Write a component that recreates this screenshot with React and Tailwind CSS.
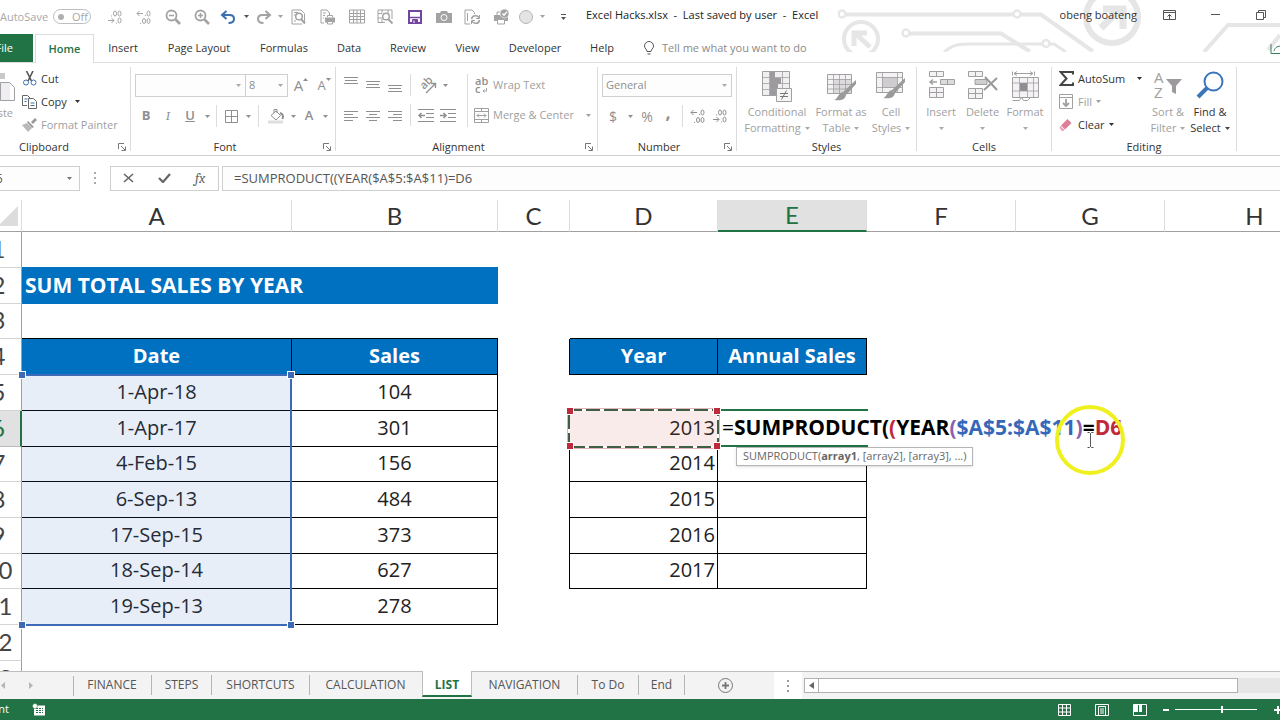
import React from 'react';
import clsx from 'clsx';

const Svg = ({ w, h, children, className }) => (
    <svg width={w} height={h} viewBox={`0 0 ${w} ${h}`} fill="none" stroke="currentColor" className={clsx('shrink-0', className)} aria-hidden="true">
        {children}
    </svg>
);

const Caret = ({ className }) => (
    <Svg w={5} h={3} className={className}>
        <path d="M0 0h5L2.5 3z" fill="currentColor" stroke="none" />
    </Svg>
);

const IconButton = ({ label, className, children }) => (
    <button aria-label={label} className={clsx('flex items-center justify-center h-[22px] shrink-0', className)}>
        {children}
    </button>
);

/* ---------- quick access icons ---------- */

const Decimals = ({ left }) => (
    <Svg w={16} h={14}>
        {left ? (
            <>
                <path d="M1 3.5h6M3.5 1L1 3.5 3.5 6" />
                <ellipse cx="12.5" cy="3.5" rx="1.5" ry="2.5" />
                <path d="M9 5.5h1M4 13.5h1" />
                <ellipse cx="8" cy="11" rx="1.5" ry="2.5" />
                <ellipse cx="12.5" cy="11" rx="1.5" ry="2.5" />
            </>
        ) : (
            <>
                <path d="M1 10.5h6M4.5 8L7 10.5 4.5 13" />
                <ellipse cx="12.5" cy="10.5" rx="1.5" ry="2.5" />
                <path d="M9 13h1M4 6h1" />
                <ellipse cx="8" cy="3.5" rx="1.5" ry="2.5" />
                <ellipse cx="12.5" cy="3.5" rx="1.5" ry="2.5" />
            </>
        )}
    </Svg>
);

const Zoom = ({ plus }) => (
    <Svg w={16} h={16}>
        <circle cx="6.5" cy="6.5" r="5" strokeWidth="1.8" />
        <path d="M10.5 10.5L15 15" strokeWidth="2.6" />
        <path d={plus ? 'M4 6.5h5M6.5 4v5' : 'M4 6.5h5'} strokeWidth="1.5" />
    </Svg>
);

const Undo = ({ flip }) => (
    <Svg w={16} h={14} className={flip ? '-scale-x-100' : ''}>
        <path d="M2 5h7.5c3 0 4.5 1.8 4.5 4S12 13 8.5 13" strokeWidth="2" />
        <path d="M6.5 1L2 5l4.500 4" strokeWidth="2" />
    </Svg>
);

const PageSearch = () => (
    <Svg w={15} h={16}>
        <path d="M13.5 13V4.5L10 1H1v14h10" />
        <path d="M3 3.5h4M3 6h2M3 12h2" />
        <circle cx="8" cy="7.5" r="3.3" strokeWidth="1.5" />
        <path d="M10 10l4 4.5" strokeWidth="2" />
    </Svg>
);

const PagePrint = () => (
    <Svg w={17} h={16}>
        <path d="M10.5 6V4L8 1H2v13h3" />
        <path d="M4 4h3M4 6.5h2M4 9h1" />
        <path d="M6 8.5h10v5H6z" fill="currentColor" stroke="none" />
        <path d="M8.5 8V6.5h5V8M8.5 12.5h5V15h-5z" fill="#fff" />
    </Svg>
);

const GridIcon = () => (
    <Svg w={16} h={15}>
        <path d="M.5 1h15v13H.5zM.5 4.5h15M.5 7.5h15M.5 10.5h15M4.5 1v13M8 1v13M11.5 1v13" />
    </Svg>
);

const GridSearch = () => (
    <Svg w={17} h={16}>
        <path d="M8 13.5H1V1h14v9M1 4.5h4M1 9h4M5 1v3M5 10v3M11 1v3" />
        <circle cx="9" cy="7.5" r="3.3" strokeWidth="1.5" />
        <path d="M11 10l4.5 4.5" strokeWidth="2" />
    </Svg>
);

const Save = () => (
    <Svg w={14} h={14}>
        <path d="M1 1h12v12H1z" strokeWidth="2" />
        <path d="M2 7.5h10" strokeWidth="1.5" />
        <path d="M4.5 9.5h5V13h-5z" fill="currentColor" />
        <path d="M6 10.5V13" stroke="#fff" />
    </Svg>
);

const Camera = () => (
    <Svg w={16} h={14}>
        <path d="M0 3h4l1-2h6l1 2h4v10H0z" fill="currentColor" stroke="none" />
        <circle cx="8" cy="7.5" r="3" stroke="#fff" />
    </Svg>
);

const PageRefresh = () => (
    <Svg w={17} h={16}>
        <path d="M10.5 5V3.5L8 1H1v14h5" />
        <path d="M3.5 4v8" />
        <path d="M7.5 10c.5-2.500 2.500-3.500 4.500-3.200 1.500.2 2.500 1 3 2.200M15.500 11c-.5 2.500-2.500 3.500-4.500 3.200-1.500-.2-2.500-1-3-2.200" strokeWidth="1.6" />
        <path d="M15.5 6v3.5H12M7.5 15v-3.5H11" />
    </Svg>
);

const PrintCheck = () => (
    <Svg w={17} h={16}>
        <path d="M1 6h14v6H1z" fill="currentColor" stroke="none" />
        <path d="M4 6V3h5M4.5 10.5h7V15h-7z" fill="#fff" />
        <circle cx="11.5" cy="4.5" r="4.5" fill="currentColor" stroke="#fff" strokeWidth=".6" />
        <path d="M9.5 4.5l1.5 1.7 3-3.400" stroke="#fff" strokeWidth="1.3" />
    </Svg>
);

/* circuit board pattern behind the caption buttons */
const Circuit = () => (
    <svg width="442" height="52" viewBox="838 0 442 52" fill="none" stroke="#e6e6e6" strokeWidth="4" className="absolute top-0 right-0" aria-hidden="true">
        <circle cx="842" cy="14" r="3.5" strokeWidth="2.5" />
        <path d="M846 14.500h167M1021 14.500h20l52 37" />
        <circle cx="1017" cy="14" r="3.500" strokeWidth="2.500" />
        <circle cx="906" cy="33" r="3.500" strokeWidth="2.500" />
        <path d="M910 33.500h91l29 18" />
        <path d="M944 52c10-9 18-8 34-8h64M1050 44h4l12 8" strokeWidth="3" />
        <circle cx="1046" cy="43.500" r="3.500" strokeWidth="2.500" />
        <circle cx="861" cy="39" r="17" />
        <path d="M854 46V33h13M855 33l15 14" strokeWidth="5" />
        <circle cx="1112" cy="17" r="26" strokeWidth="6" />
        <path d="M1101 28l19-19M1103 9h20v20" strokeWidth="7" />
        <path d="M1204 52l24-27h52M1268 50l12-15" />
    </svg>
);

const QuickAccess = () => (
    <div className="flex items-center text-[#a3a3a3]">
        <IconButton label="Increase decimal" className="w-[29px]"><Decimals /></IconButton>
        <IconButton label="Decrease decimal" className="w-[29px]"><Decimals left /></IconButton>
        <IconButton label="Zoom out" className="w-[29px]"><Zoom /></IconButton>
        <IconButton label="Zoom in" className="w-[29px]"><Zoom plus /></IconButton>
        <IconButton label="Undo" className="w-6 text-[#3b6fb0]"><Undo /></IconButton>
        <IconButton label="Undo list" className="w-3 text-[#555]"><Caret /></IconButton>
        <IconButton label="Redo" className="w-6"><Undo flip /></IconButton>
        <IconButton label="Redo list" className="w-2"><Caret /></IconButton>
        <IconButton label="Print preview" className="w-[29px]"><PageSearch /></IconButton>
        <IconButton label="Quick print" className="w-[29px]"><PagePrint /></IconButton>
        <IconButton label="Gridlines" className="w-[29px]"><GridIcon /></IconButton>
        <IconButton label="Zoom to selection" className="w-[29px]"><GridSearch /></IconButton>
        <IconButton label="Save" className="w-[29px] text-[#7245a0]"><Save /></IconButton>
        <IconButton label="Camera" className="w-[29px]"><Camera /></IconButton>
        <IconButton label="Refresh" className="w-[29px]"><PageRefresh /></IconButton>
        <IconButton label="Print" className="w-[29px]"><PrintCheck /></IconButton>
        <IconButton label="Record" className="w-5">
            <span className="size-[14px] rounded-full border border-[#b5b5b5] bg-[#e4e4e4]" />
        </IconButton>
        <IconButton label="Record list" className="w-3"><Caret /></IconButton>
        <IconButton label="Customize toolbar" className="w-[30px] text-[#555]">
            <Svg w={5} h={6}>
                <path d="M0 .5h5" />
                <path d="M0 3h5L2.5 6z" fill="currentColor" stroke="none" />
            </Svg>
        </IconButton>
    </div>
);

const TitleBar = () => (
    <header className="flex items-center h-[33px] shrink-0">
        <span className="w-[47px] text-[11px] leading-4 text-[#a8a8a8]">AutoSave</span>
        <button className="flex items-center gap-2 w-[38px] h-[15px] ml-[6px] mr-[9px] pl-1 rounded-full border border-[#bdbdbd] text-[11px] leading-3 text-[#a8a8a8]">
            <span className="size-[6px] rounded-full bg-[#b0b0b0]" />
            Off
        </button>
        <QuickAccess />
        <h1 className="ml-2 text-[11px] leading-4 pb-1 text-[#222] whitespace-pre">Excel Hacks.xlsx  -  Last saved by user  -  Excel</h1>
        <div className="ml-auto flex items-center pb-1 text-[#555]">
            <span className="text-[11px] leading-4 text-[#333] pr-5">obeng boateng</span>
            <IconButton label="Ribbon display options" className="w-[25px]">
                <Svg w={13} h={10}>
                    <path d="M.5.5h12v9H.5zM.5 2.5h12M6.5 9V4.5M4.5 6.5l2-2 2 2" />
                </Svg>
            </IconButton>
            <IconButton label="Minimize" className="w-[67px]">
                <Svg w={9} h={1}><path d="M0 .5h9" /></Svg>
            </IconButton>
            <IconButton label="Restore" className="w-[31px] pl-1 pr-3">
                <Svg w={10} h={10}><path d="M.5 2.5h7v7h-7zM2.5 2.5v-2h7v7h-2" /></Svg>
            </IconButton>
        </div>
    </header>
);

const menuTabs = [
    ['Insert', 'w-[58px]'],
    ['Page Layout', 'w-[94px]'],
    ['Formulas', 'w-[76px]'],
    ['Data', 'w-[54px]'],
    ['Review', 'w-[64px]'],
    ['View', 'w-[55px]'],
    ['Developer', 'w-[80px]'],
    ['Help', 'w-[54px]'],
];

const MenuBar = () => (
    <nav className="relative flex h-[30px] pt-px border-b border-[#dcdcdc] text-[11px] text-[#333] shrink-0">
        <button className="flex justify-end items-center w-[33px] h-7 pr-5 bg-[#217346] text-white">File</button>
        <button className="ml-[2px] w-[59px] h-[29px] bg-white border border-b-0 border-[#dcdcdc] text-[#217346] font-semibold">Home</button>
        {menuTabs.map(([name, width]) => (
            <button key={name} className={clsx('h-7 pt-px whitespace-nowrap', width)}>{name}</button>
        ))}
        <label className="flex items-center h-7 pl-[15px] gap-2 text-[#555]">
            <Svg w={10} h={14}>
                <path d="M3 10.5c0-2-2.500-3-2.500-5.500a4.500 4.500 0 0 1 9 0c0 2.500-2.500 3.500-2.500 5.500zM3.500 13h3" />
            </Svg>
            <input className="w-44 bg-transparent outline-none placeholder:text-[#8a8a8a]" placeholder="Tell me what you want to do" aria-label="Tell me what you want to do" />
        </label>
        <button aria-label="Share" className="ml-auto h-7 w-[10px] overflow-hidden text-[#3a7d5a]">
            <Svg w={14} h={12}>
                <path d="M1 2v9.5h13M4 9c1-4 4-5 8-5" />
            </Svg>
        </button>
    </nav>
);

/* ---------- ribbon ---------- */

const Launcher = () => (
    <Svg w={8} h={8} className="text-[#777]">
        <path d="M.5 6V.5H6M3 3l4 4M7.5 3.5v4h-4" />
    </Svg>
);

const Group = ({ label, width, launcher, children }) => (
    <section className="flex shrink-0" aria-label={label}>
        <div className={clsx('flex flex-col', width)}>
            <div className="h-[72px]">{children}</div>
            <div className="flex items-center h-4 text-[11px] leading-4 text-[#333]">
                <span className={clsx('flex-1 text-center', launcher && 'pr-1')}>{label}</span>
                {launcher && (
                    <button aria-label={`${label} settings`} className="w-3"><Launcher /></button>
                )}
            </div>
        </div>
        <div className="w-px h-[84px] bg-[#dcdcdc]" />
    </section>
);

const Divider = ({ className }) => <div className={clsx('w-px h-[22px] bg-[#dcdcdc]', className)} />;

const Lines = ({ widths, align }) => (
    <Svg w={14} h={11}>
        {widths.map((w, i) => {
            const x = align === 'right' ? 14 - w : align === 'center' ? (14 - w) / 2 : 0;
            return <path key={i} d={`M${x} ${i * 3 + 1.5}h${w}`} />;
        })}
    </Svg>
);

const ClipboardGroup = () => (
    <Group label="Clipboard" width="w-[156px] -ml-[26px]" launcher>
        <div className="flex">
            <button className="flex flex-col items-end w-12 pt-1 shrink-0 text-[11px] leading-4 text-[#a0a0a0]">
                <Svg w={22} h={34} className="mr-1.5">
                    <path d="M0 2h11v6H0z" fill="#c9c9c9" stroke="none" />
                    <path d="M2 11h14v18H2z" fill="#efedf1" stroke="none" />
                    <path d="M6.5 11.5h9l5 5v13h-14z" />
                </Svg>
                <span className="pr-[9px]">Paste</span>
            </button>
            <div className="flex flex-col text-[11px] leading-4 text-[#333]">
                <button className="flex items-center gap-1 h-[23px]">
                    <Svg w={15} h={15}>
                        <path d="M4.5 0l5 10M11 0L6 10" stroke="#555" strokeWidth="1.6" />
                        <circle cx="4" cy="11.5" r="2.5" stroke="#3b6fb0" />
                        <circle cx="11.5" cy="11.5" r="2.5" stroke="#3b6fb0" />
                    </Svg>
                    Cut
                </button>
                <button className="flex items-center gap-1 h-[23px]">
                    <Svg w={15} h={14}>
                        <path d="M5 10.5H.5V.5h5l3 3" stroke="#666" />
                        <path d="M6.5 3.5h5l3 3v7h-8z" stroke="#666" />
                        <path d="M2.5 4h3M2.5 6.5h2M8.5 8h4M8.5 10.5h4" stroke="#3b6fb0" />
                    </Svg>
                    Copy
                    <Caret className="ml-1" />
                </button>
                <button className="flex items-center gap-1 h-[23px] text-[#a0a0a0] whitespace-nowrap">
                    <Svg w={15} h={14}>
                        <path d="M9 4l4-4 2 2-4 4z" fill="#999" stroke="none" />
                        <path d="M6 3l6 6-2 1-5-6z" fill="#999" stroke="none" />
                        <path d="M0 7l5-2 5 5-4 4z" fill="#b9b9b9" stroke="none" />
                    </Svg>
                    Format Painter
                </button>
            </div>
        </div>
    </Group>
);

const Combo = ({ label, value, className }) => (
    <span className={clsx('relative flex items-center h-[23px]', className)}>
        <select aria-label={label} className="w-full h-full appearance-none border border-[#cfcfcf] bg-[#fdfdfd] pl-[3px] text-[11px] text-[#8f8f8f] outline-none">
            <option>{value}</option>
        </select>
        <Caret className="absolute right-[5px] text-[#aaa]" />
    </span>
);

const FontGroup = () => (
    <Group label="Font" width="w-[204px]" launcher>
        <div className="flex flex-col gap-2 pt-[7px] pl-1 text-[#8f8f8f]">
            <div className="flex items-center">
                <Combo label="Font family" value=" " className="w-[111px] -mr-px" />
                <Combo label="Font size" value="8" className="w-[43px]" />
                <IconButton label="Grow font" className="w-[26px] text-[15px]">A<Caret className="rotate-180 mb-3" /></IconButton>
                <IconButton label="Shrink font" className="w-5 text-[13px]">A<Caret className="mb-3" /></IconButton>
            </div>
            <div className="flex items-center text-[13px]">
                <IconButton label="Bold" className="w-[22px] font-bold">B</IconButton>
                <IconButton label="Italic" className="w-[22px] italic font-serif">I</IconButton>
                <IconButton label="Underline" className="w-[22px] font-semibold underline">U</IconButton>
                <IconButton label="Underline style" className="w-3"><Caret /></IconButton>
                <Divider className="mx-[3px]" />
                <IconButton label="Borders" className="w-[22px]">
                    <Svg w={13} h={13}><path d="M.5.5h12v12H.5zM6.5.5v12M.5 6.5h12" /></Svg>
                </IconButton>
                <IconButton label="Border style" className="w-3"><Caret /></IconButton>
                <Divider className="mx-1" />
                <IconButton label="Fill color" className="w-[26px]">
                    <Svg w={16} h={16}>
                        <path d="M3 7.5L8 3l4.5 4.5L8 12zM6 5V1.5h3V5" />
                        <path d="M12 5c3 1 3.500 3 2.500 6" strokeWidth="2" />
                        <path d="M0 12.5h15v3H0z" fill="#dedede" stroke="none" />
                    </Svg>
                </IconButton>
                <IconButton label="Fill colors" className="w-2"><Caret /></IconButton>
                <IconButton label="Font color" className="w-6 font-semibold">A</IconButton>
                <IconButton label="Font colors" className="w-2"><Caret /></IconButton>
            </div>
        </div>
    </Group>
);

const Indent = ({ out }) => (
    <Svg w={16} h={13}>
        <path d="M0 .5h16M8 4.5h8M8 8.5h8M0 12.5h16" />
        <path d={out ? 'M7 6.5H1M3.5 4L1 6.5 3.5 9' : 'M0 6.5h6M3.5 4L6 6.5 3.5 9'} strokeWidth="1.5" />
    </Svg>
);

const AlignmentGroup = () => (
    <Group label="Alignment" width="w-[261px]" launcher>
        <div className="flex pt-[7px] pl-1 text-[#8f8f8f]">
            <div className="flex flex-col gap-2">
                <div className="flex">
                    <IconButton label="Top align" className="w-[22px] pb-2"><Lines widths={[14, 12, 14]} align="center" /></IconButton>
                    <IconButton label="Middle align" className="w-[22px]"><Lines widths={[14, 12, 14]} align="center" /></IconButton>
                    <IconButton label="Bottom align" className="w-[22px] pt-2"><Lines widths={[14, 12, 14]} align="center" /></IconButton>
                    <Divider className="mx-1" />
                    <IconButton label="Orientation" className="w-6">
                        <Svg w={18} h={17} className="overflow-visible">
                            <text x="0" y="0" fontSize="11" fontWeight="600" fill="currentColor" stroke="none" transform="translate(6 13) rotate(-45)">ab</text>
                            <path d="M8 16l9-9M13 6.5h4.500V11" strokeWidth="1.3" />
                        </Svg>
                    </IconButton>
                    <IconButton label="Orientation list" className="w-3"><Caret /></IconButton>
                </div>
                <div className="flex">
                    <IconButton label="Align left" className="w-[22px]"><Lines widths={[14, 9, 14, 9]} /></IconButton>
                    <IconButton label="Center" className="w-[22px]"><Lines widths={[14, 8, 14, 8]} align="center" /></IconButton>
                    <IconButton label="Align right" className="w-[22px]"><Lines widths={[14, 9, 14, 9]} align="right" /></IconButton>
                    <Divider className="mx-1" />
                    <IconButton label="Decrease indent" className="w-[22px]"><Indent out /></IconButton>
                    <IconButton label="Increase indent" className="w-[22px]"><Indent /></IconButton>
                </div>
            </div>
            <div className="w-px h-[53px] ml-2 mr-[6px] bg-[#dcdcdc]" />
            <div className="flex flex-col gap-2 text-[11px] text-[#a0a0a0]">
                <button className="flex items-center gap-1 h-[22px] whitespace-nowrap">
                    <Svg w={15} h={17}>
                        <text x="1" y="8" fontSize="11" fill="#8f8f8f" stroke="none" fontWeight="600">ab</text>
                        <text x="1" y="16" fontSize="11" fill="#8f8f8f" stroke="none" fontWeight="600">c</text>
                        <path d="M12.500 11v3H9M10.500 12.500L9 14l1.500 1.500" />
                    </Svg>
                    Wrap Text
                </button>
                <button className="flex items-center gap-1 h-[22px] whitespace-nowrap">
                    <Svg w={15} h={15}>
                        <path d="M.5.5h14v14H.5zM.5 3.5h14M.5 11.5h14M7.5.5v3M7.5 11.5v3M3 7.5h9M5 5.5l-2 2 2 2M10 5.5l2 2-2 2" />
                    </Svg>
                    Merge &amp; Center
                    <Caret className="ml-2" />
                </button>
            </div>
        </div>
    </Group>
);

const NumberGroup = () => (
    <Group label="Number" width="w-[138px]" launcher>
        <div className="flex flex-col gap-2 pt-[7px] pl-1 text-[#8f8f8f]">
            <Combo label="Number format" value="General" className="w-[130px]" />
            <div className="flex items-center text-[14px]">
                <IconButton label="Accounting format" className="w-[22px]">$</IconButton>
                <IconButton label="Accounting list" className="w-3"><Caret /></IconButton>
                <IconButton label="Percent" className="w-[22px]">%</IconButton>
                <IconButton label="Comma" className="w-5 font-bold text-[18px] pb-2">,</IconButton>
                <Divider className="mx-1" />
                <IconButton label="More decimals" className="w-[22px]"><Decimals left /></IconButton>
                <IconButton label="Fewer decimals" className="w-[22px]"><Decimals /></IconButton>
            </div>
        </div>
    </Group>
);

const BigButton = ({ lines, dark, width, children }) => (
    <button className={clsx('flex flex-col items-center pt-1 text-[11px] leading-4 whitespace-nowrap shrink-0', width, dark ? 'text-[#333]' : 'text-[#a0a0a0]')}>
        <span className="flex justify-center h-[33px]">{children}</span>
        <span>{lines[0]}</span>
        <span className="flex items-center gap-1 h-4">
            {lines[1]}
            <Caret className={dark ? 'text-[#444]' : 'text-[#aaa]'} />
        </span>
    </button>
);

const Brush = ({ x, y }) => (
    <g transform={`translate(${x} ${y})`} stroke="none">
        <path d="M22 0v4L12 15l-3-3z" fill="#9a9a9a" />
        <path d="M9 12l3 3c-1 5-6 6-12 5 4-1 4-7 9-8z" fill="#9a9a9a" />
    </g>
);

const StylesGroup = () => (
    <Group label="Styles" width="w-[179px]">
        <div className="flex pl-[5px]">
            <BigButton lines={['Conditional', 'Formatting']} width="w-[70px]">
                <Svg w={30} h={31}>
                    <path d="M.5.5h27v24H.5z" fill="#f1eff2" />
                    <path d="M8 1h5v6H8zM8 7h11v6H8zM8 13h8v5H8zM8 18h6v6H8z" fill="#9c9a9e" stroke="none" />
                    <path d="M.5 6.5h27M.5 12.5h27M.5 18.5h27M7.5.5v24M20.5.5v24" strokeWidth=".8" />
                    <path d="M14.5 17.5h15v13h-15z" fill="#f6f6f6" />
                    <path d="M18 22.5h8M18 25.5h8M24.5 19.5l-5 9" stroke="#777" />
                </Svg>
            </BigButton>
            <BigButton lines={['Format as', 'Table']} width="w-[58px]">
                <Svg w={30} h={31}>
                    <path d="M1.5 3.5h24v19h-24z" fill="#f4f2f5" />
                    <path d="M8 8h17v14H8z" fill="#dcdadd" stroke="none" />
                    <path d="M1.5 8.5h24M1.5 13.5h24M1.5 18h24M7.5 3.5v19M13.5 3.5v19M19.5 3.5v19" strokeWidth=".8" />
                    <Brush x={8} y={9} />
                </Svg>
            </BigButton>
            <BigButton lines={['Cell', 'Styles']} width="w-[42px]">
                <Svg w={30} h={31}>
                    <path d="M.5 1.5h26v20H.5z" fill="#f4f2f5" />
                    <path d="M6 6h16v11H6z" fill="#cfcdd0" stroke="none" />
                    <path d="M.5 6.5h26M.5 16.5h26M6.5 1.5v20M21.5 1.5v20" strokeWidth=".8" />
                    <Brush x={7} y={7} />
                </Svg>
            </BigButton>
        </div>
    </Group>
);

const CellsGroup = () => (
    <Group label="Cells" width="w-[134px]">
        <div className="flex pl-1">
            <BigButton lines={['Insert', '']} width="w-[40px]">
                <Svg w={27} h={28}>
                    <path d="M1.5.5h14v5h-14zM8.5.5v5M1.5 16.5h14v10h-14zM1.5 21.5h14M8.5 16.5v10" fill="#f4f2f5" />
                    <path d="M12.5 8.5h14v5h-14zM19.5 8.5v5" fill="#dcdadd" />
                    <path d="M9 11H2M5 8.5L2 11l3 2.500" strokeWidth="1.5" />
                </Svg>
            </BigButton>
            <BigButton lines={['Delete', '']} width="w-[43px]">
                <Svg w={30} h={28}>
                    <path d="M.5.5h14v5H.5zM7.5.5v5M.5 17.5h14v10H.5zM.5 22.5h14M7.5 17.5v10" fill="#f4f2f5" />
                    <path d="M7 8.5h12v5H7z" fill="#cfcdd0" />
                    <path d="M17 6l12 13M29 7L16 19" strokeWidth="2" stroke="#999" />
                </Svg>
            </BigButton>
            <BigButton lines={['Format', '']} width="w-[42px]">
                <Svg w={29} h={31}>
                    <path d="M1.5.5v4M23.5.5v4M3 2.5h19M6 .5l-3 2 3 2M19 .5l3 2-3 2" />
                    <path d="M1.5 6.5h26v20h-26z" fill="#f4f2f5" />
                    <path d="M9 12h7v8H9z" fill="#8f8d91" stroke="none" />
                    <path d="M1.5 12h26M1.5 20h26M8.5 6.5v20M16.5 6.5v20M22.5 6.5v20" strokeWidth=".8" />
                    <path d="M1.5 29.5h7l2-3 2 3h4l3-3" />
                </Svg>
            </BigButton>
        </div>
    </Group>
);

const EditingGroup = () => (
    <Group label="Editing" width="w-[184px]">
        <div className="flex pl-[7px]">
            <div className="flex flex-col w-[88px] text-[11px] leading-4 text-[#333]">
                <button className="flex items-center gap-1 h-[23px]">
                    <Svg w={15} h={15}>
                        <path d="M14 3.5V1H1.5l6 6.5-6 6.5H14v-2.5" strokeWidth="2" stroke="#444" />
                    </Svg>
                    AutoSum
                    <Caret className="ml-2" />
                </button>
                <button className="flex items-center gap-1 h-[23px] text-[#a0a0a0]">
                    <Svg w={15} h={15}>
                        <path d="M.5.5h13v14H.5zM.5 3.5h13" />
                        <path d="M7 5v7M4 9l3 3 3-3" strokeWidth="1.8" />
                    </Svg>
                    Fill
                    <Caret />
                </button>
                <button className="flex items-center gap-1 h-[23px]">
                    <Svg w={15} h={14}>
                        <path d="M8.5 1l4 4L6 11.5l-4-4z" fill="#dc7f97" stroke="none" />
                        <path d="M1.5 8l4 4-2 1.5L.5 10z" fill="#e9a3b4" stroke="none" />
                    </Svg>
                    Clear
                    <Caret />
                </button>
            </div>
            <BigButton lines={['Sort &', 'Filter']} width="w-[42px]">
                <Svg w={29} h={28}>
                    <text x="0" y="12" fontSize="15" fill="#a0a0a0" stroke="none">A</text>
                    <text x="0" y="27" fontSize="15" fill="#a0a0a0" stroke="none">Z</text>
                    <path d="M12 8h16l-6 7v8l-4-2v-6z" fill="#9c9a9e" stroke="none" />
                </Svg>
            </BigButton>
            <BigButton lines={['Find &', 'Select']} width="w-[42px]" dark>
                <Svg w={28} h={28}>
                    <circle cx="17.5" cy="10.5" r="9" stroke="#3b76bb" strokeWidth="2" />
                    <path d="M11 17l-9 9" stroke="#3b76bb" strokeWidth="4" />
                </Svg>
            </BigButton>
        </div>
    </Group>
);

const Ribbon = () => (
    <div className="flex h-[93px] pt-1 border-b border-[#d0d0d0] overflow-hidden shrink-0">
        <ClipboardGroup />
        <FontGroup />
        <AlignmentGroup />
        <NumberGroup />
        <StylesGroup />
        <CellsGroup />
        <EditingGroup />
    </div>
);

const FormulaBar = () => (
    <div className="flex items-center h-[44px] shrink-0 text-[12px] text-[#555]">
        <div className="relative flex items-center w-20 h-[25px] overflow-hidden">
            <input aria-label="Name box" readOnly value="E6" className="w-24 h-full -ml-4 pl-1 border border-[#cfcfcf] bg-[#fdfdfd] shrink-0 outline-none" />
            <Caret className="absolute right-2 text-[#777]" />
        </div>
        <div className="flex justify-center w-[30px]">
            <Svg w={2} h={12} className="text-[#aaa]"><path d="M1 0v12" strokeWidth="2" strokeDasharray="2 3" /></Svg>
        </div>
        <div className="flex items-center justify-around w-[109px] h-[25px] border border-[#cfcfcf] text-[#666]">
            <IconButton label="Cancel" className="w-7">
                <Svg w={11} h={10}><path d="M1 1l9 8M10 1L1 9" strokeWidth="1.6" /></Svg>
            </IconButton>
            <IconButton label="Enter" className="w-7">
                <Svg w={13} h={10}><path d="M1 5l4 4 7-8" strokeWidth="2.2" /></Svg>
            </IconButton>
            <IconButton label="Insert function" className="w-7 text-[14px] italic font-serif">fx</IconButton>
        </div>
        <input aria-label="Formula" readOnly value="=SUMPRODUCT((YEAR($A$5:$A$11)=D6" className="flex-1 h-[25px] ml-[3px] pl-[11px] border border-r-0 border-[#cfcfcf] bg-[#fdfdfd] text-[13px] text-[#555] outline-none" />
    </div>
);

/* ---------- worksheet ---------- */

const columns = [
    ['A', 'w-[270px]'],
    ['B', 'w-[206px]'],
    ['C', 'w-[72px]'],
    ['D', 'w-[148px]'],
    ['E', 'w-[149px]'],
    ['F', 'w-[149px]'],
    ['G', 'w-[149px]'],
    ['H', ''],
];

const sales = {
    5: ['1-Apr-18', 104],
    6: ['1-Apr-17', 301],
    7: ['4-Feb-15', 156],
    8: ['6-Sep-13', 484],
    9: ['17-Sep-15', 373],
    10: ['18-Sep-14', 627],
    11: ['19-Sep-13', 278],
};

const years = { 6: 2013, 7: 2014, 8: 2015, 9: 2016, 10: 2017 };
const rows = [1, 2, 3, 4, 5, 6, 7, 8, 9, 10, 11, 12, 13];
const shortRows = [3, 7, 10];

const Handle = ({ className }) => <span className={clsx('absolute size-[6px] outline outline-white', className)} />;

const DateRange = () => (
    <div className="absolute z-10 -top-px left-0 -right-px h-[252px] border-2 border-l-0 border-[#3d6ab5] bg-[#4472c4]/12 pointer-events-none">
        <Handle className="-top-1 -left-[3px] bg-[#3d6ab5]" />
        <Handle className="-top-1 -right-1 bg-[#3d6ab5]" />
        <Handle className="-bottom-1 -left-[3px] bg-[#3d6ab5]" />
        <Handle className="-bottom-1 -right-1 bg-[#3d6ab5]" />
    </div>
);

const YearRange = () => (
    <div className="absolute z-20 -top-[2px] -left-[2px] -right-[2px] -bottom-[2px] outline outline-[#c9808a]/60 bg-[#c0392b]/10 pointer-events-none">
        <svg className="absolute inset-0 size-full" fill="none" aria-hidden="true">
            <rect width="100%" height="100%" stroke="#fff" strokeWidth="4" />
            <rect width="100%" height="100%" stroke="#3f5f45" strokeWidth="4" strokeDasharray="14 4" />
        </svg>
        <Handle className="-top-px -left-px bg-[#c0283c]" />
        <Handle className="-top-px -right-px bg-[#c0283c]" />
        <Handle className="-bottom-px -left-px bg-[#c0283c]" />
        <Handle className="-bottom-px -right-px bg-[#c0283c]" />
    </div>
);

const Pointer = () => (
    <div className="absolute -top-1 right-1 size-[70px] rounded-full border-4 border-[#f0f01e] flex items-center justify-center pointer-events-none text-[#555]">
        <Svg w={7} h={16}>
            <path d="M.5.5h2l1 1 1-1h2M3.5 1.5v13M.5 15.5h2l1-1 1 1h2" />
        </Svg>
    </div>
);

const CellEditor = () => (
    <div className="absolute -top-[2px] left-[3px] z-10 h-[38px] w-[408px]">
        <div className="absolute inset-y-0 left-0 w-[147px] border-y-2 border-[#217346] bg-white" />
        <div className="relative pl-px text-[21px] leading-9 font-bold text-black whitespace-nowrap">
            <span className="font-normal">=</span>SUMPRODUCT(<span className="text-[#c0283c]">(</span>YEAR<span className="text-[#8b5fb0]">(</span>
            <span className="text-[#3568b8]">$A$5:$A$11</span><span className="text-[#8b5fb0]">)</span>=<span className="text-[#c0283c]">D6</span>
        </div>
        <div role="tooltip" className="absolute top-[38px] left-[15px] h-[19px] px-[6px] border border-[#b5b5b5] bg-white shadow-sm text-[11px] leading-4 text-[#666] whitespace-nowrap">
            SUMPRODUCT(<b>array1</b>, [array2], [array3], ...)
        </div>
        <Pointer />
    </div>
);

const headCell = 'border-b border-r border-black bg-[#0070c0] text-white font-bold text-center';

const SheetRow = ({ n }) => {
    const sale = sales[n];
    const year = years[n];
    const active = n === 6;
    const head = n === 4;

    return (
        <tr className={shortRows.includes(n) ? 'h-[35px]' : 'h-[36px]'}>
            <th scope="row" className={clsx("p-0 pb-[2px] border-b border-r font-['Lato'] font-normal text-[24px] leading-8", active ? 'bg-[#e1e1e1] text-[#217346] border-b-[#bbb] border-r-2 border-r-[#217346]' : 'text-[#444] border-b-[#d4d4d4] border-r-[#a0a0a0]')}>
                {n}
            </th>
            {n === 2 ? (
                <td colSpan={2} className="p-0 pb-[3px] pl-[3px] bg-[#0070c0] text-[21px] leading-8 text-white font-bold">SUM TOTAL SALES BY YEAR</td>
            ) : (
                <>
                    <td className={clsx('relative p-0 pb-[2px] text-center', sale && 'border-b border-r border-black', head && headCell, n === 1 && 'border-b border-[#0070c0]', n === 3 && 'border-b border-black')}>
                        {head ? 'Date' : sale && sale[0]}
                        {n === 5 && <DateRange />}
                    </td>
                    <td className={clsx('p-0 pb-[2px] text-center', sale && 'border-b border-r border-black', head && headCell, n === 1 && 'border-b border-[#0070c0]', n === 3 && 'border-b border-black')}>
                        {head ? 'Sales' : sale && sale[1]}
                    </td>
                </>
            )}
            <td className={clsx('p-0', (head || year) && 'border-r border-black')} />
            <td className={clsx('relative p-0 pb-[2px]', head && headCell, year && 'border-b border-r border-black text-right pr-[2px]', n === 3 && 'border-b border-black')}>
                {head ? 'Year' : year}
                {active && <YearRange />}
            </td>
            <td className={clsx('relative p-0 pb-[2px]', head && headCell, year && 'border-b border-r border-black', n === 3 && 'border-b border-black')}>
                {head && 'Annual Sales'}
                {active && <CellEditor />}
            </td>
            <td className="p-0" />
            <td className="p-0" />
            <td className="p-0" />
        </tr>
    );
};

const Worksheet = () => (
    <main className="flex-1 min-h-0 overflow-hidden">
        <div className="-ml-6 min-w-[1369px]">
            <table className="table-fixed w-full border-separate border-spacing-0 text-[20px] leading-8 text-[#222]">
                <thead>
                    <tr className="h-8 font-['Lato']">
                        <th className="w-[46px] p-0 border-r border-r-[#dcdcdc] border-b border-b-[#a0a0a0]">
                            <Svg w={20} h={20} className="ml-auto mr-[3px]">
                                <path d="M20 0v20H0z" fill="#dcdcdc" stroke="none" />
                            </Svg>
                        </th>
                        {columns.map(([name, width]) => (
                            <th key={name} scope="col" className={clsx('p-0 border-r border-r-[#dcdcdc] font-normal text-[24px] leading-[30px]', width, name === 'E' ? 'bg-[#e1e1e1] text-[#217346] border-b-2 border-b-[#217346]' : 'text-[#333] border-b border-b-[#a0a0a0]')}>
                                {name}
                            </th>
                        ))}
                    </tr>
                </thead>
                <tbody>
                    {rows.map((n) => <SheetRow key={n} n={n} />)}
                </tbody>
            </table>
        </div>
    </main>
);

/* ---------- bottom bars ---------- */

const sheets = [
    ['FINANCE', 'w-[79px]'],
    ['STEPS', 'w-[60px]'],
    ['SHORTCUTS', 'w-[98px]'],
    ['CALCULATION', 'w-[112px]'],
    ['LIST', 'w-[50px]'],
    ['NAVIGATION', 'w-[106px]'],
    ['To Do', 'w-[61px]'],
    ['End', 'w-[46px]'],
];

const SheetTabs = () => (
    <div className="flex h-7 border-t border-[#bdbdbd] bg-[#f3f3f3] text-[12px] text-[#555] shrink-0">
        <div className="flex items-center w-[73px] gap-6 text-[#b5b5b5]">
            <Svg w={5} h={7}><path d="M5 0v7L1 3.5z" fill="currentColor" stroke="none" /></Svg>
            <Svg w={5} h={7}><path d="M0 0v7l4-3.500z" fill="currentColor" stroke="none" /></Svg>
        </div>
        <div className="w-px h-5 mt-1 -mr-px bg-[#b5b5b5]" />
        {sheets.map(([name, width]) => (
            name === 'LIST' ? (
                <button key={name} className={clsx('h-[26px] pt-[3px] -mt-px bg-white border-x border-x-[#bdbdbd] border-b-2 border-b-[#217346] text-[#217346] font-bold', width)}>{name}</button>
            ) : (
                <button key={name} className={clsx('flex items-center h-[26px] whitespace-nowrap', width)}>
                    <span className="flex-1">{name}</span>
                    <span className={clsx('w-px h-5', name !== 'CALCULATION' && 'bg-[#b5b5b5]')} />
                </button>
            )
        ))}
        <button aria-label="New sheet" className="flex items-center justify-center w-[89px] pr-2">
            <Svg w={15} h={15} className="text-[#777]">
                <circle cx="7.5" cy="7.5" r="7" />
                <path d="M4 7.5h7M7.5 4v7" strokeWidth="1.8" />
            </Svg>
        </button>
        <div className="flex items-center justify-center w-7 bg-white">
            <Svg w={2} h={12} className="text-[#999]"><path d="M1 0v12" strokeWidth="2" strokeDasharray="2 3" /></Svg>
        </div>
        <div className="flex items-center flex-1 pl-[2px]">
            <button aria-label="Scroll left" className="flex items-center justify-center w-[15px] h-[15px] border border-[#b0b0b0] bg-white">
                <Svg w={5} h={7}><path d="M5 0v7L0 3.5z" fill="#666" stroke="none" /></Svg>
            </button>
            <div className="flex-1 h-[15px] -ml-px bg-[#e6e6e6]">
                <div className="w-[91%] h-full border border-[#b0b0b0] bg-white" />
            </div>
        </div>
    </div>
);

const StatusBar = () => (
    <footer className="flex items-center h-[21px] bg-[#217346] text-white text-[11px] overflow-hidden shrink-0">
        <span className="flex justify-end w-[9px]">Point</span>
        <Svg w={13} h={13} className="ml-[23px]">
            <path d="M2 2.5h11v10H2z" fill="#fff" stroke="none" />
            <path d="M4 5.5h7M4 7.5h7M4 9.5h7" stroke="#217346" strokeDasharray="2 1" />
            <circle cx="3" cy="3" r="2.5" fill="#fff" stroke="#217346" strokeWidth=".5" />
        </Svg>
        <div className="flex items-center ml-auto">
            <IconButton label="Normal view" className="w-[38px]">
                <Svg w={13} h={12}><path d="M.5.5h12v11H.5zM.5 4h12M.5 8h12M4.5.5v11M8.5.5v11" /></Svg>
            </IconButton>
            <IconButton label="Page layout view" className="w-[38px]">
                <Svg w={14} h={12}><path d="M.5.5h13v11H.5zM3.5 2.5h7v9M3.5 2.5v9M5 5h4M5 7h4M5 9h4" /></Svg>
            </IconButton>
            <IconButton label="Page break view" className="w-[38px]">
                <Svg w={14} h={12}>
                    <path d="M.5.5h13v11H.5z" />
                    <path d="M1 1h4v7H1zM6 1h3v7H6z" fill="#fff" stroke="none" />
                </Svg>
            </IconButton>
            <button aria-label="Zoom out" className="w-[14px] flex justify-center">
                <Svg w={6} h={2}><path d="M0 1h6" strokeWidth="2" /></Svg>
            </button>
            <input type="range" aria-label="Zoom" defaultValue="58" className="appearance-none w-[82px] h-px ml-[2px] mr-[9px] bg-white [&::-webkit-slider-thumb]:appearance-none [&::-webkit-slider-thumb]:w-[2px] [&::-webkit-slider-thumb]:h-[7px] [&::-webkit-slider-thumb]:bg-white" />
            <button aria-label="Zoom in" className="w-[14px] pl-2 overflow-hidden">
                <Svg w={8} h={8}><path d="M0 4h8M4 0v8" strokeWidth="2" /></Svg>
            </button>
        </div>
    </footer>
);

const App = () => {
    return (
        <div className="relative flex flex-col h-screen overflow-hidden bg-white font-['Open_Sans',sans-serif]">
            <Circuit />
            <div className="relative flex flex-col flex-1 min-h-0">
                <TitleBar />
                <MenuBar />
                <Ribbon />
                <FormulaBar />
                <Worksheet />
                <SheetTabs />
                <StatusBar />
            </div>
        </div>
    );
};

export default App;
